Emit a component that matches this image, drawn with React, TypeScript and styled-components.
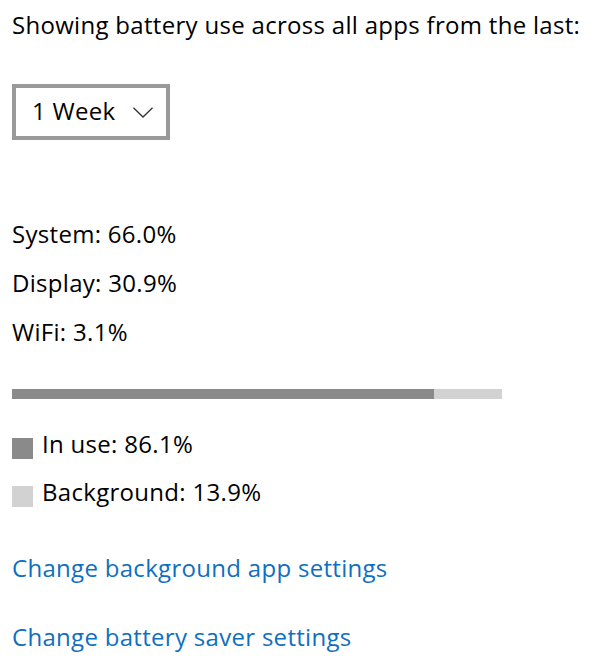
import styled, { createGlobalStyle } from "styled-components";

const GlobalStyle = createGlobalStyle`
  html, body {
    margin: 0;
    padding: 0;
    background: #ffffff;
  }
  body {
    font-family: "Open Sans", "Noto Sans", sans-serif;
    color: #000000;
  }
`;

const Page = styled.div`
  width: 595px;
  height: 669px;
  padding: 8px 12px 0 12px;
  box-sizing: border-box;
  display: flex;
  flex-direction: column;
  font-size: 24px;
  letter-spacing: 0.3px;
`;

const Intro = styled.div`
  line-height: 34px;
  white-space: nowrap;
`;

const Dropdown = styled.div`
  margin-top: 42px;
  width: 158px;
  height: 56px;
  box-sizing: border-box;
  border: 4px solid #999999;
  display: flex;
  align-items: center;
  justify-content: space-between;
  padding: 0 13px 0 16px;
`;

const DropdownLabel = styled.span`
  line-height: 1;
  margin-top: -2px;
`;

const StatList = styled.div`
  margin-top: 77px;
  display: flex;
  flex-direction: column;
  gap: 15px;
`;

const Stat = styled.div`
  line-height: 34px;
`;

const Bar = styled.div`
  margin-top: 40px;
  width: 490px;
  height: 10px;
  background: #d2d2d2;
  display: flex;
`;

const BarFill = styled.div`
  height: 100%;
  background: #8a8a8a;
`;

const Legend = styled.div`
  margin-top: 28px;
  display: flex;
  flex-direction: column;
  gap: 14px;
`;

const LegendRow = styled.div`
  display: flex;
  align-items: flex-end;
  gap: 9px;
  line-height: 34px;
`;

const Swatch = styled.span<{ $color: string }>`
  width: 21px;
  height: 21px;
  margin-bottom: 2px;
  background: ${(p) => p.$color};
  flex-shrink: 0;
`;

const Links = styled.div`
  margin-top: 42px;
  display: flex;
  flex-direction: column;
  gap: 35px;
`;

const Link = styled.a`
  color: #0f6fc0;
  text-decoration: none;
  line-height: 34px;
  cursor: pointer;
`;

const Chevron = () => (
  <svg width="20" height="11" viewBox="0 0 20 11" fill="none">
    <path d="M0.5 0.8l9.5 9.2 9.5-9.2" stroke="#333" strokeWidth="1.3" />
  </svg>
);

const inUse = 86.1;

export default function App() {
  return (
    <>
      <GlobalStyle />
      <Page>
        <Intro>Showing battery use across all apps from the last:</Intro>
        <Dropdown>
          <DropdownLabel>1 Week</DropdownLabel>
          <Chevron />
        </Dropdown>
        <StatList>
          <Stat>System: 66.0%</Stat>
          <Stat>Display: 30.9%</Stat>
          <Stat>WiFi: 3.1%</Stat>
        </StatList>
        <Bar>
          <BarFill style={{ width: `${inUse}%` }} />
        </Bar>
        <Legend>
          <LegendRow>
            <Swatch $color="#8a8a8a" />
            <span>In use: 86.1%</span>
          </LegendRow>
          <LegendRow>
            <Swatch $color="#d2d2d2" />
            <span>Background: 13.9%</span>
          </LegendRow>
        </Legend>
        <Links>
          <Link>Change background app settings</Link>
          <Link>Change battery saver settings</Link>
        </Links>
      </Page>
    </>
  );
}
